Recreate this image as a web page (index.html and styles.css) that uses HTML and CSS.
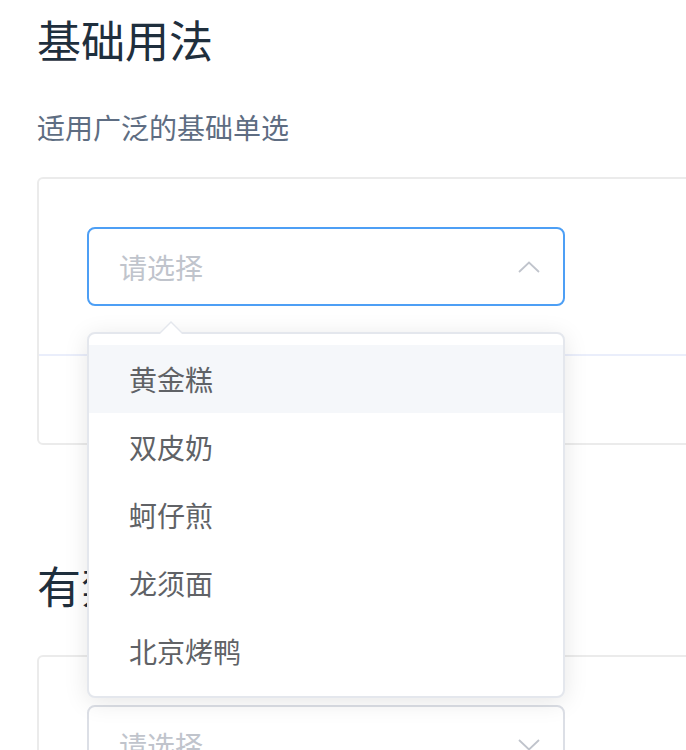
FILE: index.html
```html
<!DOCTYPE html>
<html lang="zh-CN">
<head>
<meta charset="utf-8">
<title>Select 选择器</title>
<link rel="stylesheet" href="styles.css">
</head>
<body>
<div class="page">
  <h3 class="title first">基础用法</h3>
  <p class="desc">适用广泛的基础单选</p>
  <div class="demo">
    <div class="source">
      <div class="select">
        <div class="input focus">
          <span class="placeholder">请选择</span>
          <svg class="arrow" width="22" height="12" viewBox="0 0 22 12"><path d="M1 11 L11 1.5 L21 11" fill="none" stroke="#c0c4cc" stroke-width="1.8"/></svg>
        </div>
        <div class="dropdown">
          <span class="pop-arrow"></span>
          <ul class="options">
            <li class="option hover">黄金糕</li>
            <li class="option">双皮奶</li>
            <li class="option">蚵仔煎</li>
            <li class="option">龙须面</li>
            <li class="option">北京烤鸭</li>
          </ul>
        </div>
      </div>
    </div>
    <div class="control"></div>
  </div>

  <h3 class="title second">有禁用选项</h3>
  <div class="demo">
    <div class="source">
      <div class="select">
        <div class="input">
          <span class="placeholder">请选择</span>
          <svg class="arrow" width="22" height="12" viewBox="0 0 22 12"><path d="M1 1 L11 10.5 L21 1" fill="none" stroke="#c0c4cc" stroke-width="1.8"/></svg>
        </div>
      </div>
    </div>
    <div class="control"></div>
  </div>
</div>
</body>
</html>
```
FILE: styles.css
```css
html, body {
  margin: 0;
  padding: 0;
  background: #fff;
  overflow: hidden;
}
body {
  font-family: "Noto Sans CJK SC", "Noto Sans", sans-serif;
}
.page {
  width: 1100px;
  padding-left: 37px;
}
.title {
  margin: 0;
  font-size: 44px;
  font-weight: 400;
  line-height: 78px;
  color: #1f2f3d;
}
.title.second {
  margin-top: 101px;
  margin-bottom: 31px;
}
.desc {
  margin: 27px 0 28px;
  font-size: 28px;
  line-height: 44px;
  color: #5e6d82;
}
.demo {
  border: 2px solid #ebebeb;
  border-radius: 6px;
}
.source {
  padding: 48px;
}
.control {
  height: 87px;
  border-top: 2px solid #eaeefb;
}
.select {
  position: relative;
  width: 478px;
}
.input {
  box-sizing: border-box;
  height: 79px;
  border: 2px solid #dcdfe6;
  border-radius: 8px;
  display: flex;
  align-items: center;
  justify-content: space-between;
  padding: 0 23px 0 30px;
}
.input.focus {
  border-color: #4d9ff5;
}
.placeholder {
  font-size: 28px;
  color: #c0c4cc;
}
.arrow {
  display: block;
}
.dropdown {
  position: absolute;
  left: 0;
  top: 105px;
  width: 478px;
  box-sizing: border-box;
  background: #fff;
  border: 2px solid #e4e7ed;
  border-radius: 8px;
  box-shadow: 0 4px 24px rgba(0, 0, 0, 0.1);
  z-index: 10;
}
.pop-arrow {
  position: absolute;
  left: 70px;
  top: -13px;
  width: 0;
  height: 0;
  border-left: 12px solid transparent;
  border-right: 12px solid transparent;
  border-bottom: 12px solid #e4e7ed;
}
.pop-arrow::after {
  content: "";
  position: absolute;
  left: -11px;
  top: 2px;
  border-left: 11px solid transparent;
  border-right: 11px solid transparent;
  border-bottom: 11px solid #fff;
}
.options {
  list-style: none;
  margin: 0;
  padding: 11px 0;
}
.option {
  height: 68px;
  line-height: 68px;
  padding: 0 40px;
  font-size: 28px;
  color: #606266;
}
.option.hover {
  background: #f5f7fa;
}
```
